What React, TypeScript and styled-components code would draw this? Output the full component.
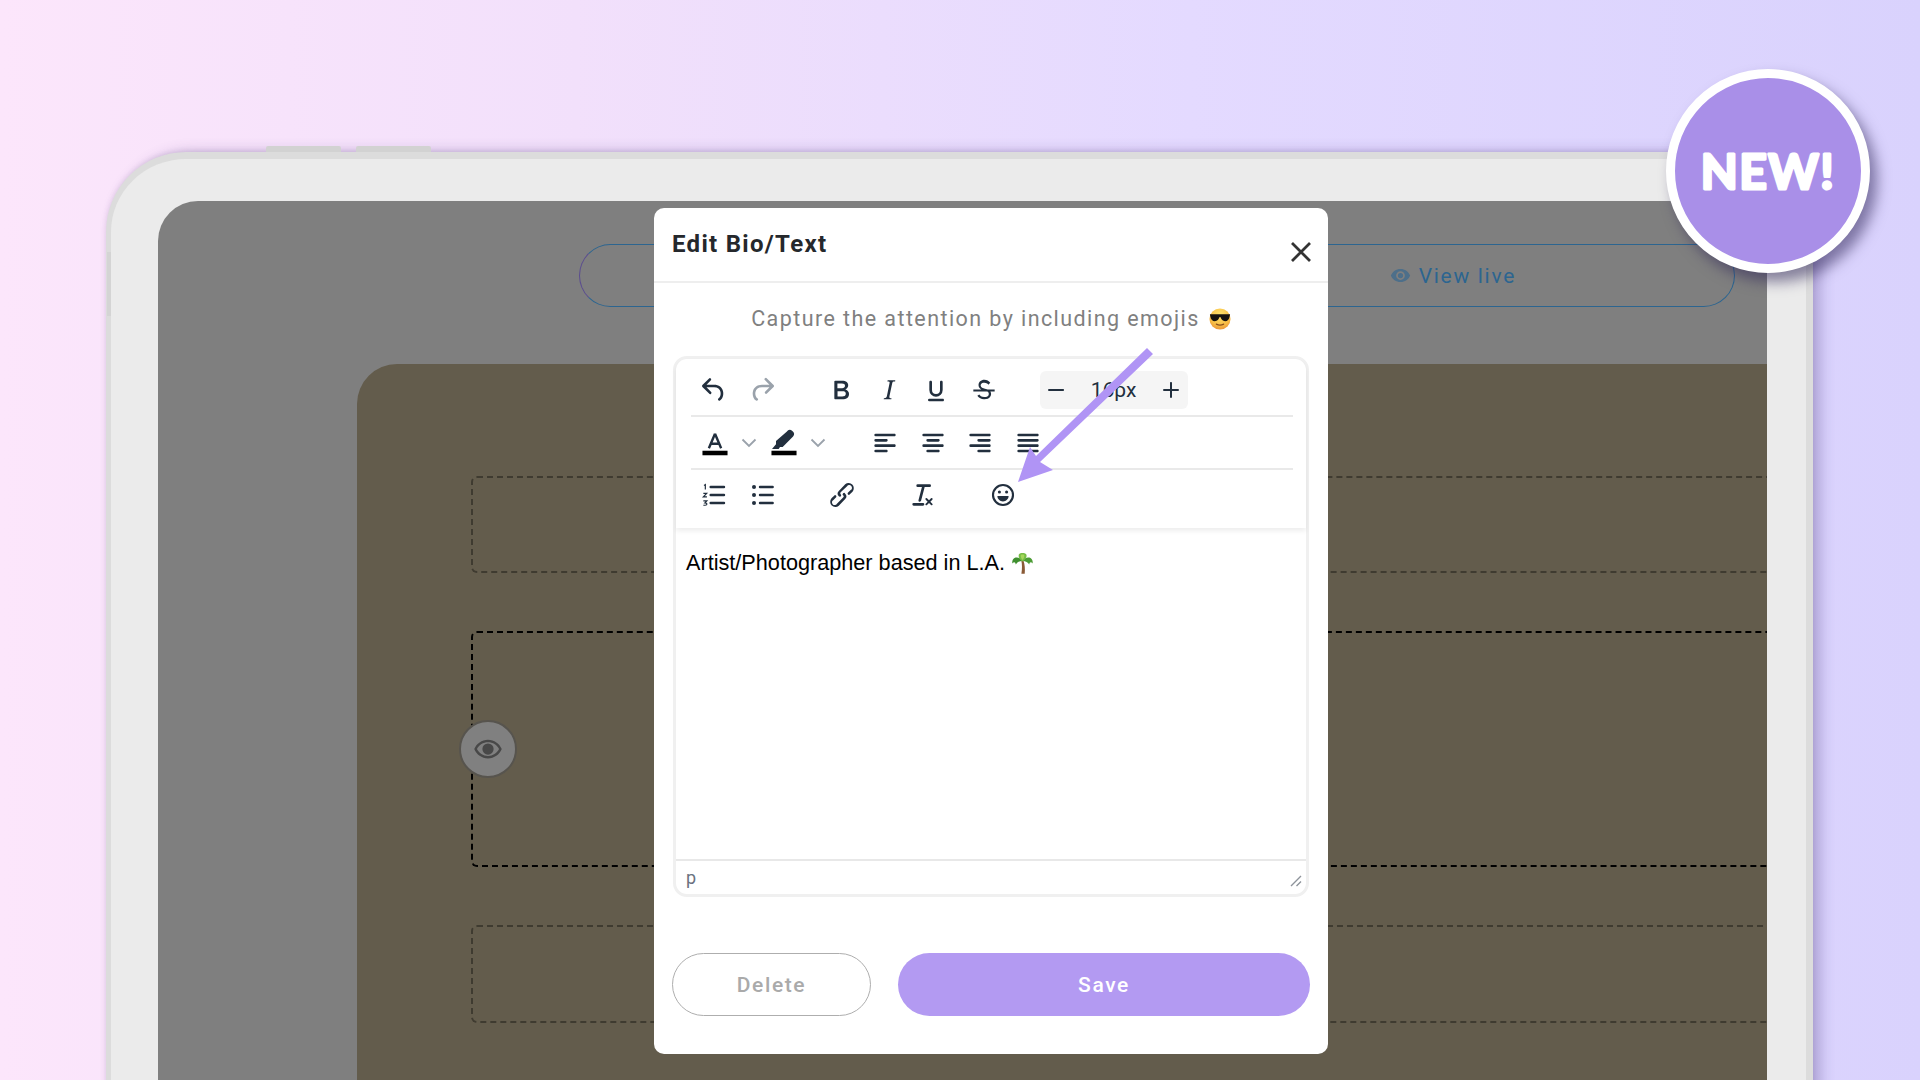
import React from 'react';
import styled, { createGlobalStyle } from 'styled-components';

const GlobalStyle = createGlobalStyle`
  html, body {
    margin: 0;
    padding: 0;
  }
  body {
    font-family: Roboto, "Liberation Sans", sans-serif;
  }
`;

const Page = styled.div`
  position: relative;
  width: 1920px;
  height: 1080px;
  overflow: hidden;
  padding: 152px 0 0 106px;
  box-sizing: border-box;
  background: linear-gradient(90deg, #fce6fb 0%, #f2e0fb 30%, #e4daff 62%, #d9d2fd 100%);
`;

const Device = styled.div`
  position: relative;
  width: 1707px;
  height: 1000px;
  box-sizing: border-box;
  padding: 42px 39px 0 47px;
  display: flex;
  background: #ebebeb;
  border: solid #dcdcdc;
  border-width: 7px 7px 0 5px;
  border-radius: 80px 80px 0 0;
  box-shadow: 8px 0 14px rgba(80, 60, 130, 0.3), 0 -1px 5px rgba(90, 70, 120, 0.14);
`;

const TopKey = styled.span<{ $left: number }>`
  position: absolute;
  top: -13px;
  left: ${({ $left }) => $left}px;
  width: 75px;
  height: 6px;
  background: #d2d2d2;
  border-radius: 2px 2px 0 0;
`;

const SideKey = styled.span`
  position: absolute;
  left: -4px;
  top: 93px;
  width: 4px;
  height: 64px;
  background: #d4d4d4;
`;

const Screen = styled.div`
  flex: 1;
  display: flex;
  flex-direction: column;
  padding-top: 43px;
  background: #7f7f7f;
  border-radius: 40px 40px 0 0;
  overflow: hidden;
`;

const PillBar = styled.div`
  display: flex;
  justify-content: flex-end;
  align-items: center;
  gap: 8px;
  margin: 0 32px 0 421px;
  padding-right: 218px;
  height: 63px;
  box-sizing: border-box;
  border-radius: 32px;
  border: 1.5px solid #2c6590;
  border-left-color: #5b4d8f;
  color: #2c6590;
  font-size: 21px;
  letter-spacing: 1.7px;
`;

const Card = styled.div`
  flex: 1;
  margin: 57px 0 0 199px;
  padding: 112px 0 0 114px;
  display: flex;
  flex-direction: column;
  gap: 58px;
  background: #635c4c;
  border-radius: 40px 0 0 0;
  overflow: hidden;
`;

const Slot = styled.div<{ $height: number; $active?: boolean }>`
  position: relative;
  flex: none;
  width: calc(100% + 20px);
  height: ${({ $height }) => $height}px;
  box-sizing: border-box;
  border: 2px dashed ${({ $active }) => ($active ? '#000' : '#3f3b30')};
  border-radius: 6px;
`;

const HideButton = styled.div`
  position: absolute;
  left: -14px;
  top: 87px;
  width: 58px;
  height: 58px;
  box-sizing: border-box;
  display: flex;
  align-items: center;
  justify-content: center;
  background: #808080;
  border: 2px solid #57544e;
  border-radius: 50%;
  color: #484848;
`;

const Modal = styled.div`
  position: absolute;
  left: 654px;
  top: 208px;
  width: 674px;
  height: 846px;
  display: flex;
  flex-direction: column;
  background: #fff;
  border-radius: 10px;
`;

const ModalHeader = styled.div`
  position: relative;
  height: 75px;
  flex: none;
  box-sizing: border-box;
  padding: 20px 18px 0;
  border-bottom: 2px solid #eeeeee;
`;

const ModalTitle = styled.h2`
  margin: 0;
  font-size: 24px;
  line-height: 32px;
  font-weight: 700;
  letter-spacing: 1.3px;
  color: #25282c;
`;

const CloseButton = styled.div`
  position: absolute;
  top: 33px;
  right: 16px;
  width: 22px;
  height: 22px;
  color: #333;
`;

const Lead = styled.p`
  margin: 21.500px 0 0;
  display: flex;
  justify-content: center;
  align-items: center;
  gap: 9px;
  height: 28px;
  font-size: 21.500px;
  letter-spacing: 1.420px;
  color: #808080;
`;

const Editor = styled.div`
  margin: 23.500px 19px 0 19px;
  height: 541px;
  display: flex;
  flex-direction: column;
  box-sizing: border-box;
  border: 3px solid #f0f0f0;
  border-radius: 14px;
`;

const Toolbar = styled.div`
  flex: none;
  height: 169px;
  padding: 0 13px 0 14.500px;
  display: flex;
  flex-direction: column;
  border-radius: 12px 12px 0 0;
  box-shadow: 0 3px 5px rgba(0, 0, 0, 0.07);
`;

const ToolRow = styled.div<{ $height: number; $last?: boolean; $shiftTop?: number; $shiftBottom?: number }>`
  display: flex;
  align-items: center;
  flex: none;
  height: ${({ $height }) => $height}px;
  box-sizing: border-box;
  padding: ${({ $shiftTop }) => $shiftTop ?? 0}px 0 ${({ $shiftBottom }) => $shiftBottom ?? 0}px;
  border-bottom: ${({ $last }) => ($last ? 'none' : '2px solid #e9e9e9')};
`;

const ToolGroup = styled.div<{ $gap?: number; $inset?: number }>`
  display: flex;
  align-items: center;
  margin-left: ${({ $inset }) => $inset ?? 0}px;
  margin-right: ${({ $gap }) => $gap ?? 32}px;
`;

const ToolButton = styled.div<{ $tone?: 'muted' }>`
  width: 47.500px;
  height: 40px;
  display: flex;
  align-items: center;
  justify-content: center;
  color: ${({ $tone }) => ($tone === 'muted' ? '#9aa2ab' : '#222f3e')};
`;

const SplitIcon = styled.div`
  width: 38px;
  height: 40px;
  display: flex;
  align-items: center;
  justify-content: center;
  color: #222f3e;
`;

const SplitChevron = styled.div`
  width: 31px;
  height: 40px;
  display: flex;
  align-items: center;
  justify-content: center;
  color: #9aa2ab;
`;

const SizeControl = styled.div`
  width: 148px;
  height: 38px;
  display: flex;
  align-items: center;
  justify-content: space-between;
  padding: 0 4px;
  box-sizing: border-box;
  background: #f5f5f5;
  border-radius: 6px;
  color: #222f3e;
  font-size: 21px;
`;

const Content = styled.div`
  flex: 1;
  padding: 20px 10px;
  font-family: "Liberation Sans", Arial, sans-serif;
  font-size: 21.660px;
  line-height: 30px;
  color: #000;
`;

const Paragraph = styled.p`
  margin: 0;
  display: flex;
  align-items: center;
  gap: 7px;
`;

const StatusBar = styled.div`
  flex: none;
  height: 35px;
  display: flex;
  align-items: center;
  justify-content: space-between;
  padding: 0 4px 0 10px;
  box-sizing: border-box;
  border-top: 2px solid #e8e8e8;
  color: #6b7280;
  font-size: 18px;
`;

const HandleSlot = styled.span`
  display: flex;
  padding-top: 7px;
`;

const Actions = styled.div`
  margin: 56px 18px 0 18px;
  display: flex;
  gap: 27px;
`;

const PillButton = styled.div<{ $primary?: boolean }>`
  height: 63px;
  flex: ${({ $primary }) => ($primary ? '1' : '0 0 199px')};
  box-sizing: border-box;
  display: flex;
  align-items: center;
  justify-content: center;
  border-radius: 32px;
  font-size: 21px;
  font-weight: 500;
  letter-spacing: 1.600px;
  color: ${({ $primary }) => ($primary ? '#fff' : '#aaaaaa')};
  background: ${({ $primary }) => ($primary ? '#b39af2' : '#fff')};
  border: ${({ $primary }) => ($primary ? 'none' : '1.500px solid #aeaeae')};
`;

const ArrowLayer = styled.svg`
  position: absolute;
  left: 1010px;
  top: 340px;
`;

const Badge = styled.div`
  position: absolute;
  left: 1666px;
  top: 69px;
  width: 204px;
  height: 204px;
  box-sizing: border-box;
  display: flex;
  align-items: center;
  justify-content: center;
  background: #a98fe8;
  border: 9px solid #fff;
  border-radius: 50%;
  box-shadow: 7px 9px 14px rgba(50, 40, 90, 0.55);
`;

const BadgeLabel = styled.text`
  font-family: Lato, "Open Sans", sans-serif;
  font-size: 48px;
  font-weight: 700;
  letter-spacing: 1.500px;
  fill: #fff;
  stroke: #fff;
  stroke-width: 3px;
  stroke-linejoin: round;
`;

const Glyph: React.FC<{ size?: number; children: React.ReactNode }> = ({ size = 32, children }) => (
  <svg width={size} height={size} viewBox="0 0 24 24" fill="currentColor">
    {children}
  </svg>
);

const Chevron = () => (
  <svg width="16" height="10" viewBox="0 0 16 10" fill="none" stroke="currentColor" strokeWidth="1.800">
    <path d="M1.500 1.500 8 8l6.500-6.500" />
  </svg>
);

const ALIGN = {
  left: 'M5 5h14c.6 0 1 .4 1 1s-.4 1-1 1H5a1 1 0 1 1 0-2Zm0 4h8c.6 0 1 .4 1 1s-.4 1-1 1H5a1 1 0 1 1 0-2Zm0 8h8c.6 0 1 .4 1 1s-.4 1-1 1H5a1 1 0 0 1 0-2Zm0-4h14c.6 0 1 .4 1 1s-.4 1-1 1H5a1 1 0 0 1 0-2Z',
  center: 'M5 5h14c.6 0 1 .4 1 1s-.4 1-1 1H5a1 1 0 1 1 0-2Zm3 4h8c.6 0 1 .4 1 1s-.4 1-1 1H8a1 1 0 1 1 0-2Zm0 8h8c.6 0 1 .4 1 1s-.4 1-1 1H8a1 1 0 0 1 0-2Zm-3-4h14c.6 0 1 .4 1 1s-.4 1-1 1H5a1 1 0 0 1 0-2Z',
  right: 'M5 5h14c.6 0 1 .4 1 1s-.4 1-1 1H5a1 1 0 1 1 0-2Zm6 4h8c.6 0 1 .4 1 1s-.4 1-1 1h-8a1 1 0 0 1 0-2Zm0 8h8c.6 0 1 .4 1 1s-.4 1-1 1h-8a1 1 0 0 1 0-2Zm-6-4h14c.6 0 1 .4 1 1s-.4 1-1 1H5a1 1 0 0 1 0-2Z',
  justify: 'M5 5h14c.6 0 1 .4 1 1s-.4 1-1 1H5a1 1 0 1 1 0-2Zm0 4h14c.6 0 1 .4 1 1s-.4 1-1 1H5a1 1 0 1 1 0-2Zm0 4h14c.6 0 1 .4 1 1s-.4 1-1 1H5a1 1 0 0 1 0-2Zm0 4h14c.6 0 1 .4 1 1s-.4 1-1 1H5a1 1 0 0 1 0-2Z',
};

const PATHS = {
  undo: 'M6.4 8H12c3.7 0 6.2 2 6.8 5.1.6 2.7-.4 5.6-2.3 6.8a1 1 0 0 1-1-1.8c1.1-.6 1.8-2.7 1.4-4.6-.5-2.1-2.1-3.5-4.9-3.5H6.4l3.3 3.3a1 1 0 1 1-1.4 1.4l-5-5a1 1 0 0 1 0-1.4l5-5a1 1 0 0 1 1.4 1.4L6.4 8Z',
  redo: 'M17.6 10H12c-2.8 0-4.4 1.4-4.9 3.5-.4 2 .3 4 1.4 4.6a1 1 0 1 1-1 1.8c-2-1.2-2.9-4.1-2.3-6.8.6-3 3-5.1 6.8-5.1h5.6l-3.3-3.3a1 1 0 1 1 1.4-1.4l5 5a1 1 0 0 1 0 1.4l-5 5a1 1 0 0 1-1.4-1.4l3.3-3.3Z',
  bold: 'M7.8 19c-.3 0-.5 0-.6-.2l-.2-.5V5.7c0-.2 0-.4.2-.5l.6-.2h5c1.5 0 2.7.3 3.5 1 .7.6 1.1 1.4 1.1 2.5a3 3 0 0 1-.6 1.9c-.4.6-1 1-1.6 1.2.4.1.9.3 1.3.6s.8.7 1 1.2c.4.4.5 1 .5 1.6 0 1.3-.4 2.3-1.3 3-.8.7-2.1 1-3.8 1H7.8Zm5-8.3c.6 0 1.2-.1 1.6-.5.4-.3.6-.7.6-1.3 0-1.1-.8-1.7-2.3-1.7H9.3v3.5h3.4Zm.5 6c.7 0 1.3-.1 1.7-.4.4-.4.6-.9.6-1.5s-.2-1-.7-1.4c-.4-.3-1-.4-2-.4H9.4v3.8h4Z',
  italic: 'M16.7 4.7l-.1.9h-.3c-.6 0-1 0-1.4.3-.3.3-.4.6-.5 1.1l-2.1 9.8v.6c0 .5.4.8 1.4.8h.2l-.2.8H8l.2-.8h.2c1.1 0 1.8-.5 2-1.5l2-9.8.1-.5c0-.6-.4-.8-1.4-.8h-.3l.2-.9h5.8Z',
  underline: 'M16 5c.6 0 1 .4 1 1v6a5 5 0 0 1-10 0V6c0-.6.4-1 1-1s1 .4 1 1v6a3 3 0 0 0 6 0V6c0-.6.4-1 1-1ZM7 18.5h10c.6 0 1 .4 1 1s-.4 1-1 1H7a1 1 0 0 1 0-2Z',
  strike: 'M15.6 8.5c-.5-.7-1-1.1-1.3-1.3-.6-.4-1.3-.6-2-.6-2.7 0-2.8 1.7-2.8 2.1 0 1.6 1.8 2 3.2 2.3 4.4.9 4.6 2.8 4.6 3.9 0 1.4-.7 4.1-5 4.1A6.2 6.2 0 0 1 7 16.4l1.5-1.1c.4.6 1.6 2 3.7 2 1.6 0 2.5-.4 3-1 .3-.4.4-.9.4-1.5 0-1.6-1.1-2-3.1-2.3-3-.5-4.6-2.2-4.6-4.2 0-2.2 1.8-4 4.4-4 1.8 0 3.3.7 4.4 2.3l-1.5 1.4ZM4 11.6h16v1.6H4z',
  minus: 'M5 11h14c.6 0 1 .4 1 1s-.4 1-1 1H5a1 1 0 0 1 0-2Z',
  plus: 'M12 4c.5 0 1 .4 1 1v6h6a1 1 0 0 1 0 2h-6v6a1 1 0 0 1-2 0v-6H5a1 1 0 0 1 0-2h6V5c0-.6.4-1 1-1Z',
  link: 'M6.2 12.3a1 1 0 0 1 1.4 1.4l-2 2a2 2 0 1 0 2.6 2.8l4.8-4.8a1 1 0 0 0 0-1.4 1 1 0 1 1 1.4-1.3 2.9 2.9 0 0 1 0 4L9.6 20a3.9 3.9 0 0 1-5.5-5.5l2-2Zm11.6-.6a1 1 0 0 1-1.4-1.4l2.1-2a2 2 0 1 0-2.7-2.8L11 10a1 1 0 0 0 0 1.4A1 1 0 1 1 9.6 13a2.9 2.9 0 0 1 0-4L14.4 4a3.9 3.9 0 0 1 5.5 5.5l-2 2Z',
  clear: 'M13.2 6a1 1 0 0 1 0 .2l-2.6 10a1 1 0 0 1-1 .8h-.2a.8.8 0 0 1-.8-1l2.6-10H8a1 1 0 1 1 0-2h9a1 1 0 0 1 0 2h-3.8ZM5 18h7a1 1 0 0 1 0 2H5a1 1 0 0 1 0-2Zm13 1.5L16.5 18 15 19.5a.7.7 0 0 1-1-1l1.5-1.5-1.5-1.5a.7.7 0 0 1 1-1l1.5 1.5 1.5-1.5a.7.7 0 0 1 1 1L17.5 17l1.5 1.5a.7.7 0 0 1-1 1Z',
};

const TextColorIcon = () => (
  <Glyph>
    <path d="M12 5 7.400 16M12 5 16.600 16M8.800 12.600h6.400" fill="none" stroke="currentColor" strokeWidth="1.800" />
    <rect x="2.600" y="17.800" width="18.800" height="3.400" fill="#000" />
  </Glyph>
);

const HighlightIcon = () => (
  <Glyph>
    <path d="M3 16.500 6 13v-2.500l8-7a2.600 2.600 0 0 1 4.800 3.700L11 15H9l-1 1.500Z" />
    <rect x="2.600" y="17.800" width="18.800" height="3.400" fill="#000" />
  </Glyph>
);

const NumberedListIcon = () => (
  <Glyph>
    <path d="M9.500 6h10M9.500 12h10M9.500 18h10" stroke="currentColor" strokeWidth="1.800" strokeLinecap="round" />
    <path d="M4.500 4.800l1-.6v3.600M4 10.800h2.500l-2.500 2.600h2.700M4 16.400h2.600l-1.400 1.500c1 0 1.500.3 1.500.9s-.5.9-1.300.9H4" fill="none" stroke="currentColor" strokeWidth=".9" />
  </Glyph>
);

const BulletListIcon = () => (
  <Glyph>
    <path d="M10.500 6h9.500M10.500 12h9.500M10.500 18h9.500" stroke="currentColor" strokeWidth="1.800" strokeLinecap="round" />
    <circle cx="6" cy="6" r="1.500" />
    <circle cx="6" cy="12" r="1.500" />
    <circle cx="6" cy="18" r="1.500" />
  </Glyph>
);

const SmileIcon = () => (
  <Glyph>
    <circle cx="12" cy="12" r="7.500" fill="none" stroke="currentColor" strokeWidth="1.600" />
    <circle cx="9.300" cy="9.800" r="1.150" />
    <circle cx="14.700" cy="9.800" r="1.150" />
    <path d="M7.800 12.800h8.400c0 2.400-1.900 4-4.200 4s-4.200-1.600-4.200-4Z" />
  </Glyph>
);

const CoolEmoji = () => (
  <svg width="22" height="22" viewBox="0 0 24 24">
    <defs>
      <radialGradient id="coolFace" cx="50%" cy="30%" r="75%">
        <stop offset="0%" stopColor="#ffe46e" />
        <stop offset="65%" stopColor="#f7bd45" />
        <stop offset="100%" stopColor="#e88d35" />
      </radialGradient>
    </defs>
    <circle cx="12" cy="12" r="11.500" fill="url(#coolFace)" />
    <path d="M1 6.800h22l-.4 2.200c-.6 3.600-2.600 5.400-5 5.400-2.600 0-4.400-1.700-4.800-4.200h-1.600c-.4 2.500-2.200 4.200-4.800 4.200-2.400 0-4.400-1.800-5-5.400Z" fill="#17130f" />
    <path d="M8 17.600c2.600 1.500 5.400 1.500 8 0" fill="none" stroke="#8a4f1c" strokeWidth="1.300" strokeLinecap="round" />
  </svg>
);

const PalmEmoji = () => (
  <svg width="21" height="22" viewBox="0 0 21 22">
    <path d="M9.300 8.500c.9 4 .9 8.500.1 13.200h3.300c.5-4.700.1-9.200-1.300-13.200Z" fill="#8a5a36" />
    <path d="M10.500 9C8.500 5.800 5 4.800 2.500 6 .8 6.900 0 9 .3 11.500 2 9.600 3.300 9.800 3.800 12.500c1.300-2.400 3.800-3.600 6.700-3.500Z" fill="#3f8f2f" />
    <path d="M10.500 9c2-3.200 5.500-4.200 8-3 1.700.9 2.500 3 2.200 5.500-1.700-1.900-3-1.700-3.500 1-1.300-2.400-3.800-3.600-6.700-3.500Z" fill="#4c9c35" />
    <path d="M10.500 9.500C7.500 7.500 6 4.500 6.800 2.400 8.500.6 12.500.6 14.400 2.400c.8 2.100-1 5.100-3.900 7.100Z" fill="#76bd45" />
    <path d="M10.500 8c-1.300-1.600-2-3.400-1.700-5 1-.6 2.500-.6 3.500 0 .3 1.600-.5 3.400-1.800 5Z" fill="#a6d65c" />
  </svg>
);

const ResizeHandle = () => (
  <svg width="12" height="12" viewBox="0 0 12 12" stroke="#8e939b" strokeWidth="1.400">
    <path d="M1 11 11 1M6.500 11 11 6.500" />
  </svg>
);

const EyeIcon: React.FC<{ size: number }> = ({ size }) => (
  <svg width={size} height={size} viewBox="0 0 24 24" fill="currentColor">
    <path d="M12 4.500C7 4.500 2.730 7.610 1 12c1.730 4.390 6 7.500 11 7.500s9.270-3.110 11-7.500c-1.730-4.390-6-7.500-11-7.500Zm0 2c3.790 0 7.170 2.130 8.820 5.500-1.650 3.370-5.020 5.500-8.820 5.500S4.830 15.370 3.180 12C4.830 8.630 8.210 6.500 12 6.500Z" />
    <path d="M12 7.500a4.500 4.500 0 1 0 0 9 4.500 4.500 0 0 0 0-9Z" />
  </svg>
);

const LiveEyeIcon = () => (
  <svg width="21" height="21" viewBox="0 0 24 24" fill="#4d6f8a">
    <path d="M12 4.500C7 4.500 2.730 7.610 1 12c1.730 4.390 6 7.500 11 7.500s9.270-3.110 11-7.500c-1.730-4.390-6-7.500-11-7.500ZM12 17a5 5 0 1 1 0-10 5 5 0 0 1 0 10Zm0-8a3 3 0 1 0 0 6 3 3 0 0 0 0-6Z" />
  </svg>
);

export default function App() {
  return (
    <Page>
      <GlobalStyle />
      <Device>
        <TopKey $left={155} />
        <TopKey $left={245} />
        <SideKey />
        <Screen>
          <PillBar>
            <LiveEyeIcon />
            View live
          </PillBar>
          <Card>
            <Slot $height={97} />
            <Slot $height={236} $active>
              <HideButton>
                <EyeIcon size={30} />
              </HideButton>
            </Slot>
            <Slot $height={98} />
          </Card>
        </Screen>
      </Device>

      <Modal>
        <ModalHeader>
          <ModalTitle>Edit Bio/Text</ModalTitle>
          <CloseButton>
            <svg width="22" height="22" viewBox="0 0 22 22" fill="none" stroke="currentColor" strokeWidth="2.800">
              <path d="M2 2l18 18M20 2 2 20" />
            </svg>
          </CloseButton>
        </ModalHeader>
        <Lead>
          Capture the attention by including emojis
          <CoolEmoji />
        </Lead>
        <Editor>
          <Toolbar>
            <ToolRow $height={58} $shiftTop={6}>
              <ToolGroup>
                <ToolButton><Glyph><path d={PATHS.undo} /></Glyph></ToolButton>
                <ToolButton $tone="muted"><Glyph><path d={PATHS.redo} /></Glyph></ToolButton>
              </ToolGroup>
              <ToolGroup>
                <ToolButton><Glyph><path d={PATHS.bold} /></Glyph></ToolButton>
                <ToolButton><Glyph><path d={PATHS.italic} /></Glyph></ToolButton>
                <ToolButton><Glyph><path d={PATHS.underline} /></Glyph></ToolButton>
                <ToolButton><Glyph><path d={PATHS.strike} /></Glyph></ToolButton>
              </ToolGroup>
              <SizeControl>
                <Glyph size={24}><path d={PATHS.minus} /></Glyph>
                16px
                <Glyph size={24}><path d={PATHS.plus} /></Glyph>
              </SizeControl>
            </ToolRow>
            <ToolRow $height={53}>
              <ToolGroup $gap={28} $inset={5}>
                <SplitIcon><TextColorIcon /></SplitIcon>
                <SplitChevron><Chevron /></SplitChevron>
                <SplitIcon><HighlightIcon /></SplitIcon>
                <SplitChevron><Chevron /></SplitChevron>
              </ToolGroup>
              <ToolGroup>
                <ToolButton><Glyph><path d={ALIGN.left} /></Glyph></ToolButton>
                <ToolButton><Glyph><path d={ALIGN.center} /></Glyph></ToolButton>
                <ToolButton><Glyph><path d={ALIGN.right} /></Glyph></ToolButton>
                <ToolButton><Glyph><path d={ALIGN.justify} /></Glyph></ToolButton>
              </ToolGroup>
            </ToolRow>
            <ToolRow $height={58} $last $shiftBottom={8}>
              <ToolGroup $gap={33}>
                <ToolButton><NumberedListIcon /></ToolButton>
                <ToolButton><BulletListIcon /></ToolButton>
              </ToolGroup>
              <ToolGroup $gap={33}>
                <ToolButton><Glyph><path d={PATHS.link} /></Glyph></ToolButton>
              </ToolGroup>
              <ToolGroup $gap={33}>
                <ToolButton><Glyph><path d={PATHS.clear} /></Glyph></ToolButton>
              </ToolGroup>
              <ToolGroup>
                <ToolButton><SmileIcon /></ToolButton>
              </ToolGroup>
            </ToolRow>
          </Toolbar>
          <Content>
            <Paragraph>
              Artist/Photographer based in L.A.
              <PalmEmoji />
            </Paragraph>
          </Content>
          <StatusBar>
            p
            <HandleSlot>
              <ResizeHandle />
            </HandleSlot>
          </StatusBar>
        </Editor>
        <Actions>
          <PillButton>Delete</PillButton>
          <PillButton $primary>Save</PillButton>
        </Actions>
      </Modal>

      <ArrowLayer width="150" height="150" viewBox="1010 340 150 150">
        <path d="M1147 348 1153 354 1040 462 1053 470 1018 482 1030 447 1036 456Z" fill="#b094f5" />
      </ArrowLayer>

      <Badge>
        <svg width="186" height="186" viewBox="0 0 186 186">
          <BadgeLabel x="93" y="111" textAnchor="middle">NEW!</BadgeLabel>
        </svg>
      </Badge>
    </Page>
  );
}
